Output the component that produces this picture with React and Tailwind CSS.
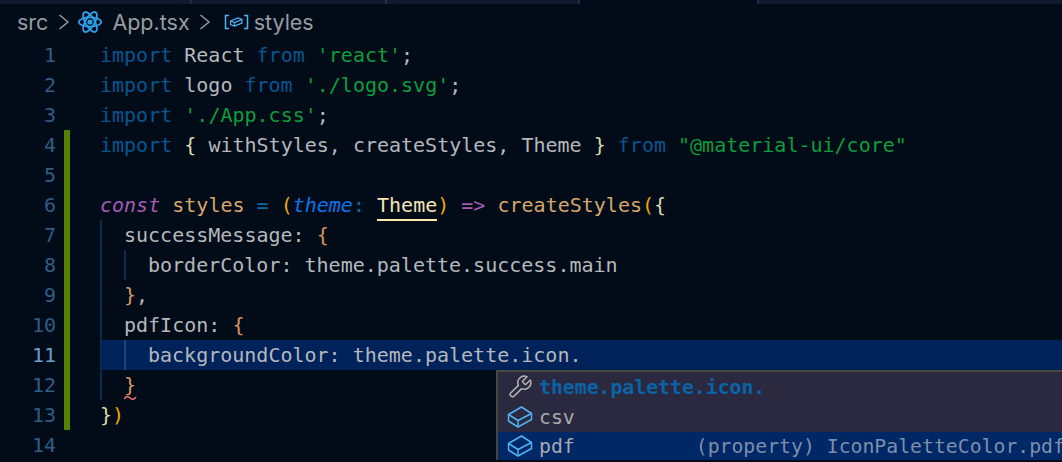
const kw = "text-[#07568f]";
const tx = "text-[#b4b8bc]";
const st = "text-[#0b9e3c]";
const pu = "text-[#a35bb5]";
const tan = "text-[#d6a76c]";
const op = "text-[#0d6a9e]";
const pa = "text-[#eda900]";
const br = "text-[#d9975f]";
const yb = "text-[#d8dcae]";
const cy = "text-[#0a74ea] italic";

function S({ c, children }) {
  return <span className={c}>{children}</span>;
}

function Guides({ n, active }) {
  return (
    <>
      {n > 0 && <span className="inline-block w-[24px] h-[30px] align-top border-l-2 border-[#0b2a4f]" />}
      {n > 1 && (
        <span className={"inline-block w-[24px] h-[30px] align-top border-l-2 " + (active ? "border-[#0f4a80]" : "border-[#0b2a4f]")} />
      )}
    </>
  );
}

function Row({ num, green, active, children }) {
  return (
    <div className="flex h-[30px] leading-[30px]">
      <div className={"w-[56px] text-right " + (active ? "text-[#6e9ec9]" : "text-[#2f5d85]")}>{num}</div>
      <div className="w-[8px]" />
      <div className={"w-[6px] " + (green ? "bg-[#568000]" : "")} />
      <div className="w-[30px]" />
      <div className={"flex-1 whitespace-pre " + (active ? "bg-[#00225a]" : "")}>{children}</div>
    </div>
  );
}

function Cube() {
  return (
    <svg width="26" height="22" viewBox="0 0 26 22" fill="none" stroke="#4fb3f5" strokeWidth="1.5" strokeLinejoin="round" className="shrink-0">
      <path d="M1.5 8.5 L14.5 1 L24.5 7.5 V13.5 L11 21 L1.5 15 Z" />
      <path d="M1.5 8.5 L11 14.5 L24.5 7.5 M11 14.5 V21" />
    </svg>
  );
}

function Chevron() {
  return (
    <svg width="12" height="18" viewBox="0 0 12 18" fill="none" stroke="#9a9ea2" strokeWidth="1.4" className="shrink-0">
      <path d="M1.5 2 L10 9 L1.5 16" />
    </svg>
  );
}

function ReactIcon() {
  return (
    <svg width="24" height="24" viewBox="0 0 24 24" fill="none" stroke="#2f9fea" strokeWidth="1.8" className="shrink-0">
      <ellipse cx="12" cy="12" rx="11.2" ry="4.6" />
      <ellipse cx="12" cy="12" rx="11.2" ry="4.6" transform="rotate(60 12 12)" />
      <ellipse cx="12" cy="12" rx="11.2" ry="4.6" transform="rotate(120 12 12)" />
      <circle cx="12" cy="12" r="2.6" fill="#2f9fea" stroke="none" />
    </svg>
  );
}

function VarIcon() {
  return (
    <svg width="25" height="16" viewBox="0 0 25 16" fill="none" stroke="#4fb3f5" strokeWidth="1.5" className="shrink-0">
      <path d="M5 1.5 H1.5 V14.5 H5 M20 1.5 H23.5 V14.5 H20" />
      <path d="M6.5 7 L14 4 L18 5.5 V9 L10.5 12 L6.5 10.5 Z M6.5 7 L10.5 8.5 L18 5.5 M10.5 8.5 V12" strokeWidth="1.2" />
    </svg>
  );
}

export default function App() {
  return (
    <div className="relative w-[1062px] h-[462px] overflow-hidden bg-[#020b18] font-['DejaVu_Sans_Mono',monospace] text-[20px]">
      <div className="flex h-[4px] bg-[#0f1a30]">
        <div className="w-[192px] border-r-2 border-[#252a45]" />
        <div className="w-[195px] border-r-2 border-[#252a45]" />
        <div className="w-[193px] border-r-2 border-[#252a45]" />
        <div className="w-[179px] bg-[#020b18] border-r-2 border-[#252a45]" />
        <div className="flex-1" />
      </div>
      <div className="flex items-center h-[36px] pl-[17px] font-['Inter',sans-serif] text-[21.5px] text-[#989ca0]">
        <span>src</span>
        <span className="ml-[10px]"><Chevron /></span>
        <span className="ml-[8px]"><ReactIcon /></span>
        <span className="ml-[10px]">App.tsx</span>
        <span className="ml-[9px]"><Chevron /></span>
        <span className="ml-[13px]"><VarIcon /></span>
        <span className="ml-[5px]">styles</span>
      </div>

      <Row num="1"><S c={kw}>import</S><S c={tx}> React </S><S c={kw}>from</S> <S c={st}>'react'</S><S c={tx}>;</S></Row>
      <Row num="2"><S c={kw}>import</S><S c={tx}> logo </S><S c={kw}>from</S> <S c={st}>'./logo.svg'</S><S c={tx}>;</S></Row>
      <Row num="3"><S c={kw}>import</S> <S c={st}>'./App.css'</S><S c={tx}>;</S></Row>
      <Row num="4" green><S c={kw}>import</S> <S c={yb}>{"{"}</S><S c={tx}> withStyles, createStyles, Theme </S><S c={yb}>{"}"}</S> <S c={kw}>from</S> <S c={st}>"@material-ui/core"</S></Row>
      <Row num="5" green />
      <Row num="6" green>
        <S c={pu + " italic"}>const</S> <S c={tan}>styles</S> <S c={op}>=</S> <S c={pa}>(</S><S c={cy}>theme</S><S c={op}>:</S>{" "}
        <span className="inline-block leading-[27px] h-[29px] border-b-2 border-[#ffe9a8] text-[#f5e6b4]">Theme</span>
        <S c={pa}>)</S> <S c={pu}>=&gt;</S> <S c={tan}>createStyles</S><S c={pa}>(</S><S c={yb}>{"{"}</S>
      </Row>
      <Row num="7" green><Guides n={1} /><S c={tx}>successMessage: </S><S c={br}>{"{"}</S></Row>
      <Row num="8" green><Guides n={2} /><S c={tx}>borderColor: theme.palette.success.main</S></Row>
      <Row num="9" green><Guides n={1} /><S c={br}>{"}"}</S><S c={tx}>,</S></Row>
      <Row num="10" green><Guides n={1} /><S c={tx}>pdfIcon: </S><S c={br}>{"{"}</S></Row>
      <Row num="11" green active><Guides n={2} active /><S c={tx}>backgroundColor: theme.palette.icon.</S></Row>
      <Row num="12" green>
        <Guides n={1} />
        <span className="relative">
          <S c={br}>{"}"}</S>
          <svg width="13" height="6" viewBox="0 0 13 6" fill="none" stroke="#f9716b" strokeWidth="1.4" className="absolute left-0 top-[22px]">
            <path d="M0 4 Q3 0 6 3 T12 2" />
          </svg>
        </span>
      </Row>
      <Row num="13" green><S c={yb}>{"}"}</S><S c={pa}>)</S></Row>
      <Row num="14" />

      <div className="absolute left-[496px] top-[370px] right-0 h-[90px] border-l-2 border-t-2 border-[#47473d] bg-[#2a2940] overflow-hidden whitespace-pre text-[19.8px]">
        <div className="flex items-center h-[30px] pl-[9px] gap-[6px]">
          <svg width="26" height="26" viewBox="0 0 24 24" fill="none" stroke="#b3b3b3" strokeWidth="1.4" strokeLinejoin="round" className="shrink-0">
            <path d="M14.7 6.3a1 1 0 0 0 0 1.4l1.6 1.6a1 1 0 0 0 1.4 0l3.77-3.77a6 6 0 0 1-7.94 7.94l-6.91 6.91a2.12 2.12 0 0 1-3-3l6.91-6.91a6 6 0 0 1 7.94-7.94l-3.76 3.76z" />
          </svg>
          <span className="pt-[2px] font-bold text-[#0a63a8]">theme.palette.icon.</span>
        </div>
        <div className="flex items-center h-[30px] pl-[9px] gap-[6px]">
          <Cube />
          <span className="pt-[2px] text-[#a8abb0]">csv</span>
        </div>
        <div className="flex items-center h-[28px] pl-[9px] gap-[6px] bg-[#002766]">
          <Cube />
          <span className="pt-[2px] text-[#a8abb0]">pdf</span>
          <span className="pt-[2px] ml-[115px] text-[#7b8fab]">(property) IconPaletteColor.pdf</span>
        </div>
      </div>
    </div>
  );
}
